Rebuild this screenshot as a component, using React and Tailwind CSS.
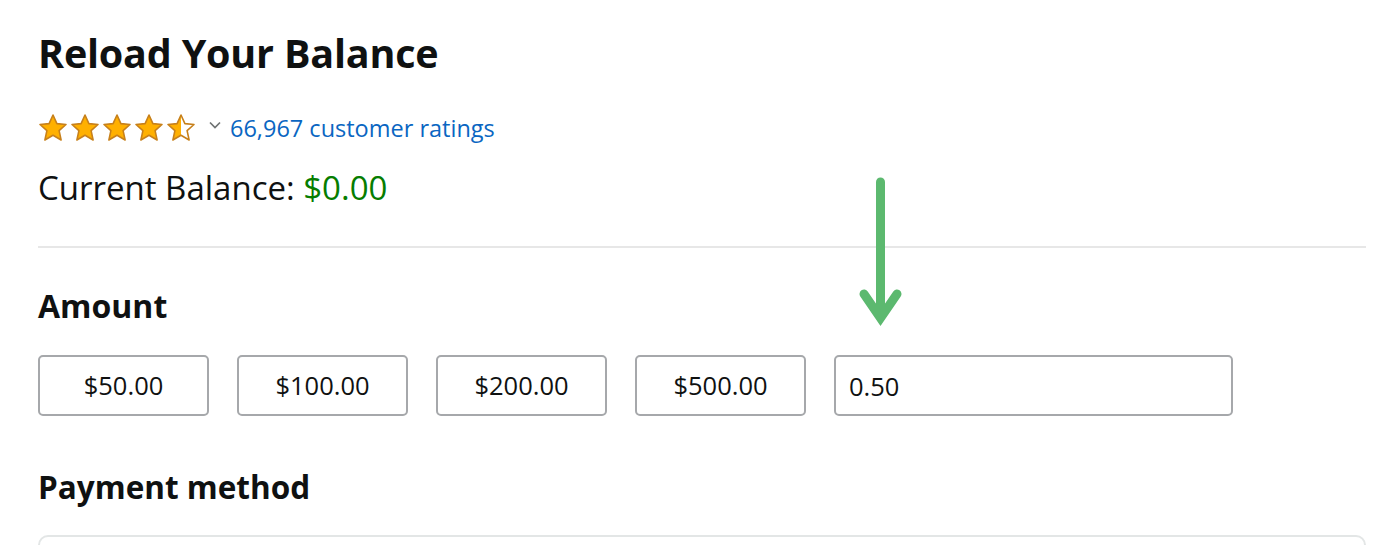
import React from 'react';

function Star({ fill = 'full' }) {
  const pts = '15,2 18.9,10.6 28,11.5 21.1,17.7 23.1,27 15,22.3 6.9,27 8.9,17.7 2,11.5 11.1,10.6';
  return (
    <svg width="30" height="30" viewBox="0 0 30 30">
      <defs>
        <linearGradient id="half">
          <stop offset="50%" stopColor="#ffb000" />
          <stop offset="50%" stopColor="#ffffff" />
        </linearGradient>
      </defs>
      <polygon
        points={pts}
        fill={fill === 'full' ? '#ffb000' : 'url(#half)'}
        stroke="#c7801b"
        strokeWidth="1.6"
        strokeLinejoin="round"
      />
    </svg>
  );
}

const amounts = ['$50.00', '$100.00', '$200.00', '$500.00'];

export default function App() {
  return (
    <div
      className="relative w-[1388px] h-[545px] overflow-hidden bg-white text-[#0f1111] pl-[38px] pr-[22px] pt-[29px]"
      style={{ fontFamily: '"Open Sans", "Noto Sans", Arial, sans-serif' }}
    >
      <h1 className="text-[39.5px] leading-[48px] font-bold tracking-[-0.2px]">Reload Your Balance</h1>

      <div className="flex items-center mt-[36px] h-[30px]">
        <div className="flex gap-[2px]">
          <Star />
          <Star />
          <Star />
          <Star />
          <Star fill="half" />
        </div>
        <svg width="16" height="12" viewBox="0 0 16 12" className="ml-[11px] mr-[7px] -mt-[6px]">
          <path d="M3 3.5l5 5 5-5" fill="none" stroke="#6f7373" strokeWidth="1.7" />
        </svg>
        <a className="text-[#0a66c2] text-[23.5px] leading-[30px]">66,967 customer ratings</a>
      </div>

      <div className="mt-[25px] text-[33px] leading-[40px]">
        Current Balance: <span className="text-[#067d00]">$0.00</span>
      </div>

      <div className="mt-[38px] h-[2px] bg-[#e7e7e7]" />

      <h2 className="mt-[38px] text-[32px] leading-[40px] font-bold">Amount</h2>

      <div className="flex mt-[29px] gap-[28px]">
        {amounts.map((a) => (
          <button
            key={a}
            className="w-[171px] h-[61px] border-2 border-[#a6a8ab] rounded-[5px] text-[25.5px] text-[#0f1111] bg-white"
          >
            {a}
          </button>
        ))}
        <div className="w-[399px] h-[61px] border-2 border-[#a6a8ab] rounded-[5px] flex items-center px-[13px] text-[25.5px] pt-[2px]">
          0.50
        </div>
      </div>

      <h2 className="mt-[51px] text-[31.5px] leading-[40px] font-bold">Payment method</h2>

      <div className="mt-[28px] h-[60px] border-2 border-[#e3e6e6] rounded-[10px]" />

      {/* annotation arrow */}
      <svg className="absolute left-[850px] top-[170px]" width="60" height="165" viewBox="0 0 60 165">
        <path d="M30.5 12 L30.5 146" stroke="#5cb96f" strokeWidth="9" strokeLinecap="round" fill="none" />
        <path d="M21 136 L30.5 150 L40 136 Z" fill="#5cb96f" />
        <path
          d="M14 124 L30.5 148 L47 124"
          stroke="#5cb96f"
          strokeWidth="9"
          strokeLinecap="round"
          strokeLinejoin="miter"
          fill="none"
        />
      </svg>
    </div>
  );
}
